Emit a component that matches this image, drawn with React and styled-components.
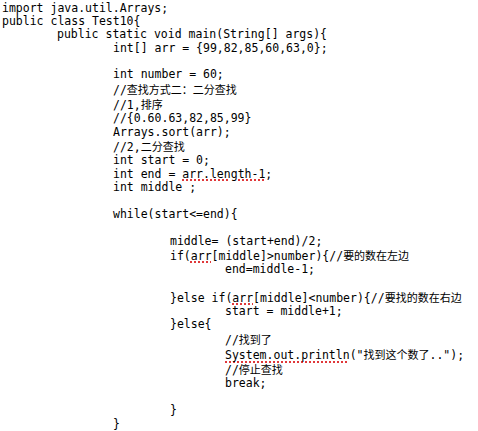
import React from "react";
import styled, { createGlobalStyle } from "styled-components";

const GlobalStyle = createGlobalStyle`
  html, body {
    margin: 0;
    padding: 0;
    background: #fff;
  }
`;

const indents = [2, 57, 113, 170, 225];

// each line: [level, segments, cjk]
// a segment is a string, or { err: text } for a spell-check underline
const code = [
  [0, ["import java.util.Arrays;"]],
  [0, ["public class Test10{"]],
  [1, ["public static void main(String[] args){"]],
  [2, ["int[] arr = {99,82,85,60,63,0};"]],
  [0, [""]],
  [2, ["int number = 60;"]],
  [2, ["//查找方式二：二分查找"], true],
  [2, ["//1,排序"], true],
  [2, ["//{0.60.63,82,85,99}"]],
  [2, ["Arrays.sort(arr);"]],
  [2, ["//2,二分查找"], true],
  [2, ["int start = 0;"]],
  [2, ["int end = ", { err: "arr.length-1" }, ";"]],
  [2, ["int middle ;"]],
  [0, [""]],
  [2, ["while(start<=end){"]],
  [0, [""]],
  [3, ["middle= (start+end)/2;"]],
  [3, ["if(", { err: "arr" }, "[middle]>number){//要的数在左边"], true],
  [4, ["end=middle-1;"]],
  [0, [""]],
  [3, ["}else if(", { err: "arr" }, "[middle]<number){//要找的数在右边"], true],
  [4, ["start = middle+1;"]],
  [3, ["}else{"]],
  [4, ["//找到了"], true],
  [4, [{ err: "System.out.println" }, "(\"找到这个数了..\");"], true],
  [4, ["//停止查找"], true],
  [4, ["break;"]],
  [0, [""]],
  [3, ["}"]],
  [2, ["}"]],
];

// wrap runs of Chinese characters so they get their own size
function withHan(text) {
  return text
    .split(/([\u3000-\u303f\u4e00-\u9fff\uff00-\uffef]+)/)
    .map((part, i) => (i % 2 ? <Han key={i}>{part}</Han> : part));
}

export default function App() {
  return (
    <>
      <GlobalStyle />
      <Editor>
        {code.map(([level, segs, cjk], i) => (
          <Line key={i} $level={level} $cjk={!!cjk}>
            {segs.map((s, j) =>
              typeof s === "string" ? (
                <React.Fragment key={j}>{withHan(s)}</React.Fragment>
              ) : (
                <Misspelt key={j}>{s.err}</Misspelt>
              )
            )}
          </Line>
        ))}
      </Editor>
    </>
  );
}

const Editor = styled.div`
  display: flex;
  flex-direction: column;
  width: 478px;
  height: 431px;
  padding-top: 1.5px;
  box-sizing: border-box;
  overflow: hidden;
  background: #fff;
  font-family: "DejaVu Sans Mono", "Noto Sans CJK SC", monospace;
  font-size: 11.5px;
  color: #000;
`;

const Line = styled.div`
  height: ${(p) => (p.$cjk ? "15.2px" : "13.4px")};
  line-height: ${(p) => (p.$cjk ? "15.2px" : "13.4px")};
  padding-left: ${(p) => indents[p.$level]}px;
  white-space: pre;
  flex-shrink: 0;
`;

const Han = styled.span`
  font-family: "Noto Sans CJK SC", sans-serif;
  font-size: 11px;
`;

const Misspelt = styled.span`
  text-decoration: underline dotted #e0383a;
  text-decoration-thickness: 2px;
  text-underline-offset: 2px;
`;
